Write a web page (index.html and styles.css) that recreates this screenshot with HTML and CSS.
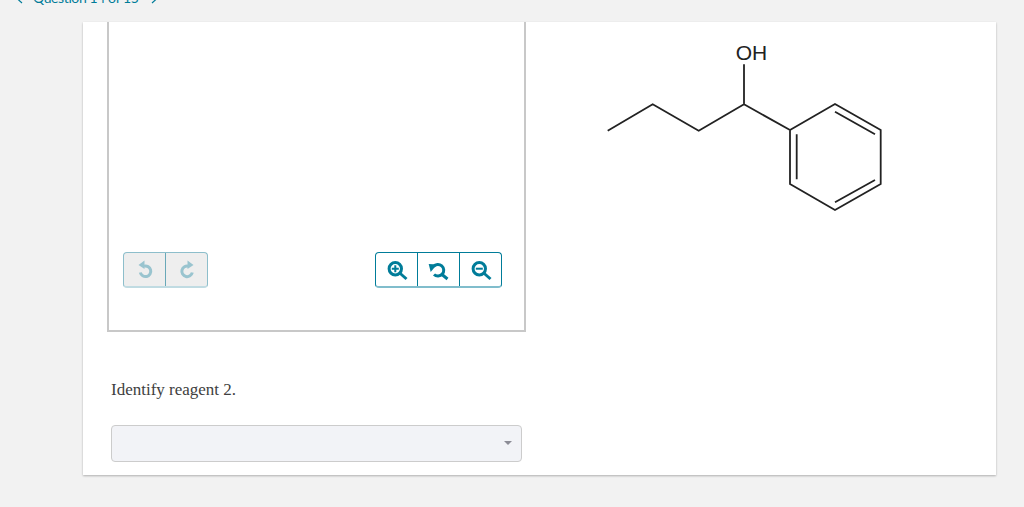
FILE: index.html
```html
<!DOCTYPE html>
<html lang="en">
<head>
<meta charset="utf-8">
<title>Question 14 of 15</title>
<link rel="stylesheet" href="styles.css">
</head>
<body>
<nav class="pager">
  <svg class="chev" width="8" height="12" viewBox="0 0 8 12"><path d="M7 1 1.500 6 7 11" /></svg>
  <span class="pager-text">Question 14 of 15</span>
  <svg class="chev" width="8" height="12" viewBox="0 0 8 12"><path d="M1 1 6.500 6 1 11" /></svg>
</nav>
<main class="card">
  <section class="left">
    <div class="canvas">
      <div class="btn-group disabled">
        <button class="tool"><svg width="20" height="24" viewBox="0 0 20 24"><path class="ic-line" d="M9 8.200A5.300 5.300 0 1 1 5.300 14.500"/><path class="ic-fill" d="M9.500 2.500V11L3.500 7z"/></svg></button>
        <button class="tool"><svg width="20" height="24" viewBox="0 0 20 24"><path class="ic-line" d="M11.500 8.200A5.300 5.300 0 1 0 15.300 14.500"/><path class="ic-fill" d="M10.500 2.500V11L16.500 7z"/></svg></button>
      </div>
      <div class="btn-group">
        <button class="tool"><svg width="22" height="22" viewBox="0 0 22 22"><circle class="ic-line" cx="9.300" cy="9.700" r="6.200"/><path class="ic-line" d="M13.700 14 20.500 20"/><path class="ic-thin" d="M5.800 9.700H12.800M9.300 6.200V13.200"/></svg></button>
        <button class="tool"><svg width="22" height="22" viewBox="0 0 22 22"><path class="ic-line" d="M5.500 7.500A5.800 5.800 0 1 1 6 15.500M14 15.500 19.500 20"/><path class="ic-fill" d="M.7 5 9 5.500 2.700 13z"/></svg></button>
        <button class="tool"><svg width="22" height="22" viewBox="0 0 22 22"><circle class="ic-line" cx="9.300" cy="9.700" r="6.200"/><path class="ic-line" d="M13.700 14 20.500 20"/><path class="ic-thin" d="M5.800 9.700H12.800"/></svg></button>
      </div>
    </div>
    <p class="prompt">Identify reagent 2.</p>
    <div class="select"><span class="caret"></span></div>
  </section>
  <svg class="molecule" width="290" height="198" viewBox="600 22 290 198">
    <path d="M607.700 130.700 652.700 104.300 698.700 130.700 744 104.300 790 130M744 104.300V64.300M790 130 835 104 880.700 130V184L835 210 790 184ZM796.700 134.300V179.300M835 111.700 875 134.300M835 202.300 875 180"/>
    <text x="751.500" y="60">OH</text>
  </svg>
</main>
</body>
</html>
```
FILE: styles.css
```css
html, body {
  margin: 0;
  height: 507px;
  overflow: hidden;
  background: #f2f2f2;
}
.pager {
  box-sizing: border-box;
  display: flex;
  align-items: flex-end;
  height: 22px;
  padding: 0 0 18px 15px;
  color: #007c99;
  font: 14px/20px Lato, sans-serif;
  letter-spacing: -.4px;
}
.pager-text { margin: 0 13px 0 10px; position: relative; top: 4px; flex: none; }
.chev { fill: none; stroke: #007c99; stroke-width: 1.200; flex: none; }
.card {
  display: flex;
  width: 913px;
  height: 453px;
  margin-left: 83px;
  background: #fff;
  box-shadow: 0 1px 2px rgba(0,0,0,.28);
}
.left {
  width: 419px;
  margin-left: 24px;
}
.canvas {
  box-sizing: border-box;
  display: flex;
  justify-content: space-between;
  align-items: flex-end;
  height: 310px;
  padding: 0 22px 42px 14px;
  border: 2px solid #c8c8c8;
  border-top: 0;
}
.btn-group {
  display: flex;
  height: 36px;
  border: 1px solid #007c99;
  border-bottom: 2px solid #80bdcc;
  border-radius: 4px;
  box-sizing: border-box;
  background: #fff;
}
.tool {
  display: flex;
  align-items: center;
  justify-content: center;
  width: 42px;
  padding: 0;
  border: 0;
  border-left: 1px solid #007c99;
  background: transparent;
}
.tool:first-child { border-left: 0; width: 41px; }
.ic-line { fill: none; stroke: #007c99; stroke-width: 3; }
.ic-thin { fill: none; stroke: #007c99; stroke-width: 2; }
.ic-fill { fill: #007c99; }
.disabled { background: #eee; border-color: #8dbecb; border-bottom-color: #c0dbe2; }
.disabled .tool { border-left-color: #69a8b8; }
.disabled .ic-line { stroke: #99c4cf; }
.disabled .ic-fill { fill: #99c4cf; }
.prompt {
  margin: 48px 0 0 4px;
  color: #404040;
  font: 17px/20px "Liberation Serif", serif;
}
.select {
  position: relative;
  box-sizing: border-box;
  width: 411px;
  height: 37px;
  margin: 25px 0 0 4px;
  background: #f2f3f7;
  border: 1px solid #ccc;
  border-bottom-width: 1.500px;
  border-radius: 4px;
}
.caret {
  position: absolute;
  right: 9px;
  top: 15px;
  border: 4px solid transparent;
  border-top: 4px solid #8c8c96;
  border-bottom: 0;
}
.molecule {
  margin-left: 74px;
  fill: none;
  stroke: #222;
  stroke-width: 1.800;
}
.molecule text {
  fill: #222;
  stroke: none;
  font: 21px "Liberation Sans", sans-serif;
  text-anchor: middle;
}
```
